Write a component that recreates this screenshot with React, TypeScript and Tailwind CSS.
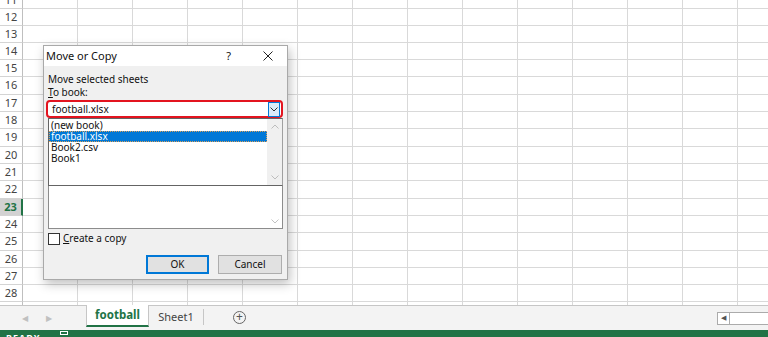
const rowHeights = [17, 17, 17, 17, 17, 18, 17, 17, 18, 17, 17, 18, 17, 17, 18, 17, 17, 17, 17];
const rows = Array.from({ length: 19 }, (_, i) => i + 11);
const cols = Array.from({ length: 14 }, (_, i) => i);

const ui = { fontFamily: '"Noto Sans", "Liberation Sans", sans-serif' };

function Chevron({ up = false }: { up?: boolean }) {
  return (
    <svg width="8" height="5" viewBox="0 0 8 5" className={up ? "rotate-180" : ""}>
      <path d="M0.5 0.5 L4 4 L7.5 0.5" fill="none" stroke="currentColor" strokeWidth="1" />
    </svg>
  );
}

function Grid() {
  return (
    <div className="h-[305px] overflow-hidden bg-white">
      <div className="-mt-[8px] flex flex-col">
        {rows.map((r, i) => {
          const active = r === 23;
          const h = rowHeights[i] === 18 ? "h-[18px]" : "h-[17px]";
          return (
            <div key={r} className={`flex shrink-0 ${h}`}>
              <div
                className={`w-[23px] shrink-0 flex items-center justify-center border-b border-[#d4d4d4] text-[11px] ${
                  active
                    ? "bg-[#d2d2d2] text-[#217346] font-bold border-r-2 border-r-[#217346]"
                    : "text-[#444] border-r border-r-[#bfbfbf]"
                }`}
              >
                {r < 29 ? r : ""}
              </div>
              {cols.map((c) => (
                <div key={c} className="w-[55px] shrink-0 border-r border-b border-[#d9d9d9]" />
              ))}
            </div>
          );
        })}
      </div>
    </div>
  );
}

function TabBar() {
  return (
    <div className="h-[25px] flex bg-[#f3f3f3] relative">
      <div className="w-[86px] h-full border-t border-[#c6c6c6] flex items-center">
        <span className="ml-[22px] text-[#c0c0c0] text-[8px]">◀</span>
        <span className="ml-[18px] text-[#c0c0c0] text-[8px]">▶</span>
      </div>
      <div className="w-[63px] h-[22px] bg-white border-l border-r border-[#c6c6c6] border-b-2 border-b-[#217346] flex items-center justify-center font-bold text-[11.5px] text-[#217346]">
        football
      </div>
      <div className="flex-1 h-full border-t border-[#c6c6c6] flex items-center">
        <div className="w-[55px] h-[16px] mt-[-2px] flex items-center justify-center border-r border-[#c6c6c6] text-[11px] text-[#444]">
          Sheet1
        </div>
        <div className="ml-[29px] mt-[-2px] w-[13px] h-[13px] rounded-full border border-[#666] flex items-center justify-center text-[#555] text-[12px] leading-none">
          +
        </div>
        <div className="ml-auto mr-[13px] mt-[-2px] flex items-center">
          <div className="flex flex-col gap-[2px] mr-[12px]">
            <span className="w-[2px] h-[2px] bg-[#9a9a9a]" />
            <span className="w-[2px] h-[2px] bg-[#9a9a9a]" />
            <span className="w-[2px] h-[2px] bg-[#9a9a9a]" />
          </div>
        </div>
      </div>
      <div className="absolute left-[717px] top-[7px] w-[60px] h-[13px] border border-[#ababab] bg-white flex">
        <div className="w-[12px] h-full border-r border-[#ababab] flex items-center justify-center text-[#555] text-[7px]">◀</div>
      </div>
    </div>
  );
}

function Dialog() {
  return (
    <div
      className="absolute left-[43px] top-[45px] w-[245px] h-[235px] border border-[#a9a9a9] bg-[#f0f0f0] shadow-[2px_4px_10px_rgba(0,0,0,0.25)] text-[10px] text-[#111] flex flex-col"
      style={ui}
    >
      <div className="h-[20px] bg-white flex items-center pl-[2px] text-[11px]">
        <span>Move or Copy</span>
        <span className="ml-auto mr-[32px] text-[11px]">?</span>
        <svg width="10" height="10" viewBox="0 0 10 10" className="mr-[14px]">
          <path d="M0.5 0.5 L9.5 9.5 M9.5 0.5 L0.5 9.5" stroke="#222" strokeWidth="1" />
        </svg>
      </div>
      <div className="flex-1 flex flex-col px-[4px] relative">
        <div className="mt-[7px] leading-[12px]">Move selected sheets</div>
        <div className="leading-[12px] mt-[1px]">
          <span className="underline">T</span>o book:
        </div>
        <div className="mt-[2px] -ml-[2px] h-[18px] w-[237px] border-2 border-[#e3141f] rounded-[4px] bg-white flex items-center">
          <span className="ml-[4px] leading-[12px]">football.xlsx</span>
          <div className="ml-auto mr-[1px] w-[12px] h-[15px] bg-[#d9ebf9] border border-[#0078d7] flex items-center justify-center text-[#333]">
            <Chevron />
          </div>
        </div>
        <div className="mt-[16px] h-[95px] w-[235px] border border-[#8c8c8c] bg-white flex">
          <div className="ml-auto w-[15px] h-full flex flex-col justify-end items-center pb-[4px] text-[#c2c2c2]">
            <Chevron />
          </div>
        </div>
        <div className="mt-[3px] flex items-center h-[13px]">
          <div className="w-[12px] h-[12px] border border-[#333] bg-white" />
          <span className="ml-[3px]">
            <span className="underline">C</span>reate a copy
          </span>
        </div>
        <div className="mt-[10px] flex justify-end gap-[9px] pr-[1px]">
          <div className="w-[63px] h-[19px] bg-[#e1e1e1] border-2 border-[#0078d7] flex items-center justify-center">OK</div>
          <div className="w-[64px] h-[19px] bg-[#e1e1e1] border border-[#adadad] flex items-center justify-center">Cancel</div>
        </div>
        <div className="absolute left-[4px] top-[52px] w-[235px] h-[68px] border border-[#646464] border-r-[#a0a0a0] bg-white flex">
          <div className="flex-1 flex flex-col">
            <div className="h-[12px] leading-[12px] pl-[2px]">(new book)</div>
            <div className="h-[11px] leading-[11px] pl-[2px] bg-[#0078d7] text-white outline-1 outline-dotted outline-[#d9a05a] -outline-offset-1">
              football.xlsx
            </div>
            <div className="h-[11px] leading-[11px] pl-[2px]">Book2.csv</div>
            <div className="h-[11px] leading-[11px] pl-[2px]">Book1</div>
          </div>
          <div className="w-[15px] h-full bg-[#f0f0f0] flex flex-col items-center justify-between py-[5px] text-[#bdbdbd]">
            <Chevron up />
            <Chevron />
          </div>
        </div>
      </div>
    </div>
  );
}

function StatusBar() {
  return (
    <div className="h-[7px] bg-[#217346] overflow-hidden flex items-start">
      <span className="ml-[6px] mt-[3px] text-[9px] leading-[10px] text-white font-bold tracking-[1px]" style={ui}>READY</span>
      <span className="ml-[20px] mt-[1px] w-[8px] h-[4px] border border-white" />
    </div>
  );
}

export default function App() {
  return (
    <div className="w-[768px] h-[337px] overflow-hidden relative bg-white" style={ui}>
      <Grid />
      <TabBar />
      <StatusBar />
      <Dialog />
    </div>
  );
}
